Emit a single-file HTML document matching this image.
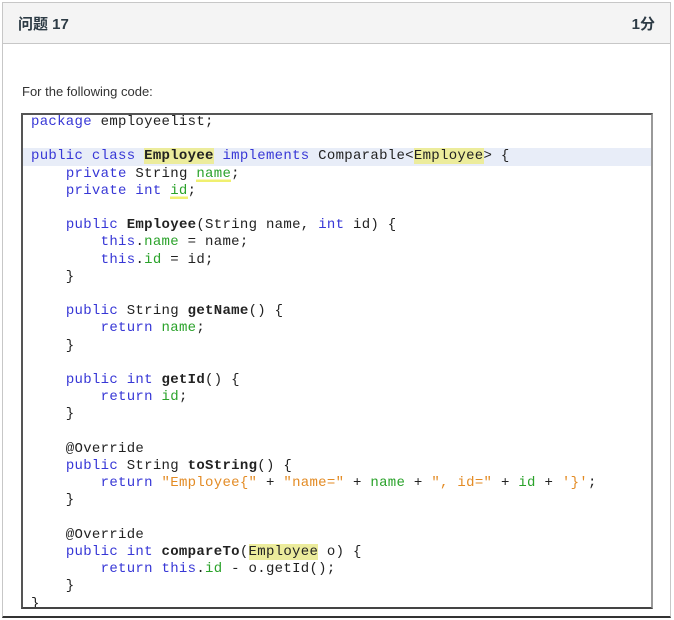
<!DOCTYPE html>
<html><head><meta charset="utf-8"><style>
html,body{margin:0;padding:0;background:#fff;width:674px;height:620px;overflow:hidden}
.card{position:absolute;left:2px;top:2px;width:667px;height:613px;border:1px solid #c7c7c7;border-bottom:2px solid #333;background:#fff}
.hdr{height:40px;background:#f4f4f4;border-bottom:1px solid #c7c7c7;position:relative;font-family:"Liberation Sans","Noto Sans CJK SC",sans-serif;font-weight:bold;font-size:15px;color:#2d3b45}
.hdr .l{position:absolute;left:15px;top:10px}
.hdr .r{position:absolute;right:15px;top:10px}
.intro{position:absolute;left:19px;top:81px;font-family:"Liberation Sans",sans-serif;font-size:13px;color:#333}
.code{position:absolute;left:18px;top:110px;width:628px;height:492px;border:2px solid #555;border-right-color:#999;border-bottom-color:#444;overflow:hidden;background:#fff}
pre{margin:0;padding:0 0 0 8px;font-family:"Liberation Mono","DejaVu Sans Mono",monospace;font-size:14px;line-height:17.2px;color:#222;position:relative;top:-1px;letter-spacing:0.3px}
.k{color:#3737d6}.f{color:#2aa22a}.s{color:#e38b24}.b{font-weight:bold}
.h{background:#ecec9c}
.hl{display:block;background:#e8edf8;margin-left:-8px;padding-left:8px}
.u{background:linear-gradient(transparent 85%,#f0f070 85%)}
</style></head><body>
<div class="card">
<div class="hdr"><span class="l">问题 17</span><span class="r">1分</span></div>
<div class="intro">For the following code:</div>
<div class="code"><pre><span class="k">package</span> employeelist;

<span class="hl"><span class="k">public class</span> <span class="h b">Employee</span> <span class="k">implements</span> Comparable&lt;<span class="h">Employee</span>&gt; {</span>    <span class="k">private</span> String <span class="f u">name</span>;
    <span class="k">private int</span> <span class="f u">id</span>;

    <span class="k">public</span> <span class="b">Employee</span>(String name, <span class="k">int</span> id) {
        <span class="k">this</span>.<span class="f">name</span> = name;
        <span class="k">this</span>.<span class="f">id</span> = id;
    }

    <span class="k">public</span> String <span class="b">getName</span>() {
        <span class="k">return</span> <span class="f">name</span>;
    }

    <span class="k">public int</span> <span class="b">getId</span>() {
        <span class="k">return</span> <span class="f">id</span>;
    }

    @Override
    <span class="k">public</span> String <span class="b">toString</span>() {
        <span class="k">return</span> <span class="s">"Employee{"</span> + <span class="s">"name="</span> + <span class="f">name</span> + <span class="s">", id="</span> + <span class="f">id</span> + <span class="s">'}'</span>;
    }

    @Override
    <span class="k">public int</span> <span class="b">compareTo</span>(<span class="h">Employee</span> o) {
        <span class="k">return this</span>.<span class="f">id</span> - o.getId();
    }
}</pre></div>
</div>
</body></html>
